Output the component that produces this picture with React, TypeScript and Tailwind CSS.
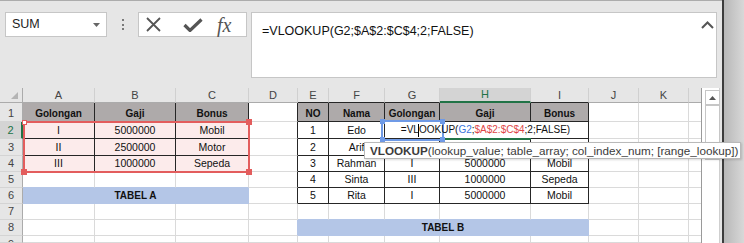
import React from 'react';

type Fill = 'gray' | 'pink' | 'blue' | undefined;
type Cell = { t?: string; b?: boolean; fill?: Fill; span?: number };

const LETTERS = ['', 'A', 'B', 'C', 'D', 'E', 'F', 'G', 'H', 'I', 'J', 'K', ''];
const ROWS = 10;
const COLS = 13;

const DATA: Record<string, Cell> = {
  '1,1': { t: 'Golongan', b: true, fill: 'gray' },
  '1,2': { t: 'Gaji', b: true, fill: 'gray' },
  '1,3': { t: 'Bonus', b: true, fill: 'gray' },
  '2,1': { t: 'I', fill: 'pink' },
  '2,2': { t: '5000000', fill: 'pink' },
  '2,3': { t: 'Mobil', fill: 'pink' },
  '3,1': { t: 'II', fill: 'pink' },
  '3,2': { t: '2500000', fill: 'pink' },
  '3,3': { t: 'Motor', fill: 'pink' },
  '4,1': { t: 'III', fill: 'pink' },
  '4,2': { t: '1000000', fill: 'pink' },
  '4,3': { t: 'Sepeda', fill: 'pink' },
  '6,1': { t: 'TABEL A', b: true, fill: 'blue', span: 3 },
  '1,5': { t: 'NO', b: true, fill: 'gray' },
  '1,6': { t: 'Nama', b: true, fill: 'gray' },
  '1,7': { t: 'Golongan', b: true, fill: 'gray' },
  '1,8': { t: 'Gaji', b: true, fill: 'gray' },
  '1,9': { t: 'Bonus', b: true, fill: 'gray' },
  '2,5': { t: '1' },
  '2,6': { t: 'Edo' },
  '3,5': { t: '2' },
  '3,6': { t: 'Arif' },
  '4,5': { t: '3' },
  '4,6': { t: 'Rahman' },
  '4,7': { t: 'I' },
  '4,8': { t: '5000000' },
  '4,9': { t: 'Mobil' },
  '5,5': { t: '4' },
  '5,6': { t: 'Sinta' },
  '5,7': { t: 'III' },
  '5,8': { t: '1000000' },
  '5,9': { t: 'Sepeda' },
  '6,5': { t: '5' },
  '6,6': { t: 'Rita' },
  '6,7': { t: 'I' },
  '6,8': { t: '5000000' },
  '6,9': { t: 'Mobil' },
  '8,5': { t: 'TABEL B', b: true, fill: 'blue', span: 5 },
};

const FILL_BG: Record<string, string> = {
  gray: 'bg-[#aeaaaa]',
  pink: 'bg-[#fcebeb]',
  blue: 'bg-[#b4c6e7]',
};
const FILL_R: Record<string, string> = {
  gray: 'border-r-[#aeaaaa]',
  pink: 'border-r-[#fcebeb]',
  blue: 'border-r-[#b4c6e7]',
};
const FILL_B: Record<string, string> = {
  gray: 'border-b-[#aeaaaa]',
  pink: 'border-b-[#fcebeb]',
  blue: 'border-b-[#b4c6e7]',
};

function covered(r: number, c: number) {
  if (r === 6 && (c === 2 || c === 3)) return true;
  if (r === 8 && c >= 6 && c <= 9) return true;
  return false;
}

function fillAt(r: number, c: number): Fill {
  if (r === 6 && c >= 1 && c <= 3) return 'blue';
  if (r === 8 && c >= 5 && c <= 9) return 'blue';
  const d = DATA[`${r},${c}`];
  return d ? d.fill : undefined;
}

function darkR(r: number, c: number) {
  return (
    (r === 1 && c >= 1 && c <= 3) ||
    (r >= 2 && r <= 4 && (c === 1 || c === 2)) ||
    (r >= 1 && r <= 6 && c >= 4 && c <= 9)
  );
}

function darkB(r: number, c: number) {
  return (r >= 2 && r <= 3 && c >= 1 && c <= 3) || (r >= 1 && r <= 6 && c >= 5 && c <= 9);
}

function DataCell({ r, c }: { r: number; c: number }) {
  const d = DATA[`${r},${c}`] || {};
  const span = d.span || 1;
  const last = c + span - 1;
  const fill = fillAt(r, c);
  let br = 'border-r-[#dadada]';
  if (last === 12) br = 'border-r-0';
  else if (darkR(r, last)) br = 'border-r-[#262626]';
  else if (fill) br = FILL_R[fill];
  else if (fillAt(r, last + 1)) br = FILL_R[fillAt(r, last + 1) as string];
  let bb = 'border-b-[#dadada]';
  if (darkB(r, c)) bb = 'border-b-[#262626]';
  else if (fill) bb = FILL_B[fill];
  else if (r < 9 && fillAt(r + 1, c)) bb = FILL_B[fillAt(r + 1, c) as string];
  const spanCls = span === 3 ? 'col-span-3' : span === 5 ? 'col-span-5' : '';
  return (
    <div
      className={`flex items-end justify-center overflow-hidden whitespace-nowrap border-r border-b pb-[1px] leading-[13px] text-[#111] ${
        d.b ? 'font-bold text-[10px]' : 'text-[10.5px]'
      } ${fill ? FILL_BG[fill] : 'bg-white'} ${br} ${bb} ${spanCls}`}
    >
      {d.t}
    </div>
  );
}

function Grid() {
  const cells: React.ReactNode[] = [];
  for (let r = 0; r < ROWS; r++) {
    for (let c = 0; c < COLS; c++) {
      const key = `${r}-${c}`;
      if (r === 0 && c === 0) {
        cells.push(
          <div key={key} className="relative bg-[#e6e6e6] border-r border-b border-r-[#ababab] border-b-[#ababab]">
            <svg className="absolute left-[11px] top-[4px]" width="7" height="7" viewBox="0 0 7 7">
              <polygon points="7,0 7,7 0,7" fill="#b4b4b4" />
            </svg>
          </div>
        );
        continue;
      }
      if (r === 0) {
        const isH = c === 8;
        const dark = c >= 5 && c <= 9;
        cells.push(
          <div
            key={key}
            className={`flex items-center justify-center text-[11px] leading-[13px] border-r ${
              c === 12 ? 'border-r-0' : 'border-r-[#d0d0d0]'
            } ${
              isH
                ? 'bg-[#d4d4d4] text-[#217346] border-b-2 border-b-[#217346]'
                : `bg-[#e6e6e6] text-[#444] border-b ${dark ? 'border-b-[#262626]' : 'border-b-[#ababab]'}`
            }`}
          >
            {LETTERS[c]}
          </div>
        );
        continue;
      }
      if (c === 0) {
        const is2 = r === 2;
        const last = r === 9;
        cells.push(
          <div
            key={key}
            className={`flex justify-center overflow-hidden text-[11px] leading-[13px] border-b border-b-[#d4d4d4] ${
              last ? 'items-start pt-[2px]' : 'items-end pb-[1px]'
            } ${
              is2
                ? 'bg-[#d4d4d4] text-[#217346] border-r-2 border-r-[#217346]'
                : 'bg-[#e6e6e6] text-[#444] border-r border-r-[#ababab]'
            }`}
          >
            <span className="shrink-0">{r}</span>
          </div>
        );
        continue;
      }
      if (covered(r, c)) continue;
      cells.push(<DataCell key={key} r={r} c={c} />);
    }
  }
  return (
    <div className="w-[701px] h-[155px] grid grid-cols-[23px_72px_81px_73px_49px_31px_56px_55px_91px_58px_50px_50px_12px] grid-rows-[15px_19px_17px_17px_16px_16px_16px_16px_16px_7px] bg-white">
      {cells}
    </div>
  );
}

export default function App() {
  return (
    <div className="relative w-[744px] h-[243px] overflow-hidden flex bg-[#d6d6d6] font-['Liberation_Sans',Arial,sans-serif]">
      <div className="w-[722px] h-full flex flex-col bg-[#e6e6e6]">
        {/* formula bar area */}
        <div className="h-[88px] border-t border-[#acacac] flex items-start pl-[5px] pt-[11px]">
          <div className="w-[102px] h-[25px] bg-white border border-[#c6c6c6] flex items-center justify-between pl-[6px] pr-[6px]">
            <span className="text-[12.5px] text-[#222] leading-none">SUM</span>
            <svg width="7" height="4" viewBox="0 0 7 4">
              <polygon points="0,0 7,0 3.5,4" fill="#666" />
            </svg>
          </div>
          <div className="w-[31px] h-[25px] flex flex-col items-center justify-center gap-[2.5px]">
            <span className="w-[2px] h-[2px] bg-[#7a7a7a]" />
            <span className="w-[2px] h-[2px] bg-[#7a7a7a]" />
            <span className="w-[2px] h-[2px] bg-[#7a7a7a]" />
          </div>
          <div className="w-[109px] h-[25px] bg-white border border-[#c6c6c6] flex items-center pl-[7px]">
            <svg width="15" height="15" viewBox="0 0 15 15">
              <path d="M1 1 L14 14 M14 1 L1 14" stroke="#555" strokeWidth="1.8" fill="none" />
            </svg>
            <svg className="ml-[22px]" width="20" height="14" viewBox="0 0 20 14">
              <path d="M1.5 7 L7 12.5 L18.5 1.5" stroke="#555" strokeWidth="3.2" fill="none" strokeLinejoin="miter" />
            </svg>
            <span className="ml-[14px] font-['Liberation_Serif',serif] italic text-[20px] leading-none text-[#555]">
              fx
            </span>
          </div>
          <div className="ml-[4px] w-[466px] h-[66px] bg-white border border-[#c6c6c6] relative pl-[10px] pt-[5px]">
            <span className="text-[12.5px] text-[#111] leading-[15px] whitespace-nowrap">=VLOOKUP(G2;$A$2:$C$4;2;FALSE)</span>
            <svg className="absolute right-[2px] top-[8px]" width="13" height="8" viewBox="0 0 13 8">
              <path d="M1 7 L6.5 1.5 L12 7" stroke="#555" strokeWidth="2" fill="none" />
            </svg>
          </div>
        </div>
        {/* sheet */}
        <div className="flex h-[155px]">
          <Grid />
          <div className="w-[21px] h-full flex">
            <div className="w-[1px] h-full bg-[#9a9a9a]" />
            <div className="relative w-[18px] h-full bg-white border-r border-[#cfcfcf]">
              <div className="absolute left-[3px] top-[2px] w-[15px] h-[15px] bg-white border border-[#c6c6c6] flex items-center justify-center">
                <svg width="7" height="4" viewBox="0 0 7 4">
                  <polygon points="3.5,0 7,4 0,4" fill="#555" />
                </svg>
              </div>
              <div className="absolute left-[3px] top-[17px] w-[15px] h-[55px] bg-white border border-[#c6c6c6]" />
            </div>
            <div className="w-[2px] h-full bg-[#e6e6e6]" />
          </div>
        </div>
      </div>
      <div className="w-[2px] h-full bg-[#3c3c3c]" />
      <div className="flex-1 h-full bg-linear-to-r from-[#b8b8b8] to-[#d8d8d8]" />

      {/* red range highlight (Table A) */}
      <div className="absolute left-[23px] top-[121px] w-[227px] h-[52px] border-2 border-[#e35d5d]" />
      <div className="absolute left-[22px] top-[120px] w-[5px] h-[5px] bg-white border border-[#e35d5d]" />
      <div className="absolute left-[246px] top-[119px] w-[6px] h-[6px] bg-[#e35d5d]" />
      <div className="absolute left-[21px] top-[169px] w-[6px] h-[6px] bg-[#e35d5d]" />
      <div className="absolute left-[246px] top-[169px] w-[6px] h-[6px] bg-[#e35d5d]" />

      {/* cell editor H2 */}
      <div className="absolute left-[385px] top-[122px] w-[203px] h-[16px] bg-white" />
      <div className="absolute left-[440px] top-[138px] w-[91px] h-[2px] bg-[#217346]" />
      <div className="absolute left-[381px] top-[120px] w-[63px] h-[21px] border-2 border-[#6f9ae6]" />
      <div className="absolute left-[380px] top-[119px] w-[5px] h-[5px] bg-[#6f9ae6]" />
      <div className="absolute left-[440px] top-[119px] w-[5px] h-[5px] bg-[#6f9ae6]" />
      <div className="absolute left-[380px] top-[137px] w-[5px] h-[5px] bg-[#6f9ae6]" />
      <div className="absolute left-[440px] top-[137px] w-[5px] h-[5px] bg-[#6f9ae6]" />
      <div className="absolute left-[440px] top-[122px] w-[91px] h-[16px] flex items-center justify-center">
        <span className="whitespace-nowrap text-[10px] leading-[13px] text-[#111]">
          =VL
          <span className="inline-block w-[1px] h-[13px] bg-black align-middle -mx-[0.5px]" />
          OOKUP(<span className="text-[#3b74dc]">G2</span>;<span className="text-[#e04848]">$A$2:$C$4</span>;2;FALSE)
        </span>
      </div>

      {/* function tooltip */}
      <div className="absolute left-[364px] top-[142px] w-[377px] h-[17px] bg-white border border-[#b9b9b9] shadow-[1px_1px_2px_rgba(0,0,0,0.15)] flex items-center pl-[5px]">
        <span className="whitespace-nowrap text-[11.7px] leading-[14px] text-[#3c3c3c]">
          <b className="font-bold">VLOOKUP</b>(lookup_value; table_array; col_index_num; [range_lookup])
        </span>
      </div>
    </div>
  );
}
